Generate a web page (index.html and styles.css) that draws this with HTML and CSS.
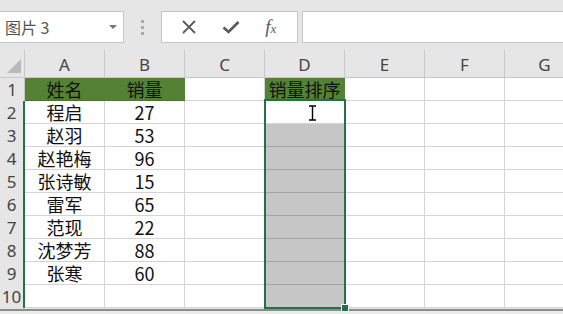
FILE: index.html
```html
<!DOCTYPE html>
<html lang="zh-CN">
<head>
    <meta charset="UTF-8">
    <title>销量排序</title>
    <link rel="stylesheet" href="styles.css">
</head>
<body>
    <div class="toolbar">
        <div class="namebox">
            <span class="name">图片 3</span>
            <span class="caret"></span>
        </div>
        <div class="grip"><i></i><i></i><i></i></div>
        <div class="fbuttons">
            <svg class="ico" width="16" height="16" viewBox="0 0 16 16"><path d="M2 2 L14 14 M14 2 L2 14" stroke="#5a5a5a" stroke-width="1.8" fill="none"/></svg>
            <svg class="ico" width="18" height="16" viewBox="0 0 18 16"><path d="M1.5 8.5 L6.5 13 L16.5 3" stroke="#5a5a5a" stroke-width="2.6" fill="none"/></svg>
            <span class="fx">f<small>x</small></span>
        </div>
        <div class="formula"></div>
    </div>

    <div class="sheet">
        <div class="corner"><svg width="16" height="16" viewBox="0 0 16 16"><polygon points="15,1 15,15 1,15" fill="#b9b9b9"/></svg></div>
        <div class="ch">A</div>
        <div class="ch">B</div>
        <div class="ch">C</div>
        <div class="ch">D</div>
        <div class="ch">E</div>
        <div class="ch">F</div>
        <div class="ch">G</div>

        <div class="rh">1</div>
        <div class="c head">姓名</div>
        <div class="c head">销量</div>
        <div class="c"></div>
        <div class="c head">销量排序</div>
        <div class="c"></div><div class="c"></div><div class="c"></div>

        <div class="rh sel">2</div>
        <div class="c">程启</div><div class="c">27</div><div class="c"></div>
        <div class="c"></div><div class="c"></div><div class="c"></div><div class="c"></div>

        <div class="rh sel">3</div>
        <div class="c">赵羽</div><div class="c">53</div><div class="c"></div>
        <div class="c fill"></div><div class="c"></div><div class="c"></div><div class="c"></div>

        <div class="rh sel">4</div>
        <div class="c">赵艳梅</div><div class="c">96</div><div class="c"></div>
        <div class="c fill"></div><div class="c"></div><div class="c"></div><div class="c"></div>

        <div class="rh sel">5</div>
        <div class="c">张诗敏</div><div class="c">15</div><div class="c"></div>
        <div class="c fill"></div><div class="c"></div><div class="c"></div><div class="c"></div>

        <div class="rh sel">6</div>
        <div class="c">雷军</div><div class="c">65</div><div class="c"></div>
        <div class="c fill"></div><div class="c"></div><div class="c"></div><div class="c"></div>

        <div class="rh sel">7</div>
        <div class="c">范现</div><div class="c">22</div><div class="c"></div>
        <div class="c fill"></div><div class="c"></div><div class="c"></div><div class="c"></div>

        <div class="rh sel">8</div>
        <div class="c">沈梦芳</div><div class="c">88</div><div class="c"></div>
        <div class="c fill"></div><div class="c"></div><div class="c"></div><div class="c"></div>

        <div class="rh sel">9</div>
        <div class="c">张寒</div><div class="c">60</div><div class="c"></div>
        <div class="c fill"></div><div class="c"></div><div class="c"></div><div class="c"></div>

        <div class="rh sel">10</div>
        <div class="c"></div><div class="c"></div><div class="c"></div>
        <div class="c fill"></div><div class="c"></div><div class="c"></div><div class="c"></div>

        <div class="selection">
            <svg class="cursor" width="9" height="16" viewBox="0 0 9 16"><path d="M1 1 H8 M4.5 1 V15 M1 15 H8" stroke="#000" stroke-width="1.4" fill="none"/></svg>
            <span class="handle"></span>
        </div>
    </div>
    <div class="footer"></div>
</body>
</html>
```

FILE: styles.css
```css
body {
    margin: 0;
    width: 563px;
    height: 314px;
    overflow: hidden;
    background-color: #e6e6e6;
    font-family: "Noto Sans CJK SC", sans-serif;
}
.toolbar {
    height: 50px;
    display: flex;
    align-items: flex-start;
    padding-top: 11px;
    box-sizing: border-box;
}
.namebox {
    width: 124px;
    height: 32px;
    box-sizing: border-box;
    background: #fff;
    border: 1px solid #c6c6c6;
    border-left: none;
    display: flex;
    align-items: center;
    justify-content: space-between;
    padding: 0 6px 0 5px;
}
.name {
    font-size: 16px;
    color: #555;
}
.caret {
    width: 0;
    height: 0;
    border-left: 4px solid transparent;
    border-right: 4px solid transparent;
    border-top: 4px solid #777;
}
.grip {
    width: 37px;
    display: flex;
    flex-direction: column;
    align-items: center;
    gap: 3px;
    padding-top: 9px;
}
.grip i {
    width: 3px;
    height: 3px;
    background: #a9a9a9;
}
.fbuttons {
    width: 137px;
    height: 32px;
    box-sizing: border-box;
    background: #fff;
    border: 1px solid #c6c6c6;
    display: flex;
    align-items: center;
    justify-content: space-around;
    padding: 0 8px 0 6px;
}
.fx {
    font-family: "Liberation Serif", serif;
    font-style: italic;
    font-size: 19px;
    color: #5a5a5a;
}
.fx small {
    font-size: 13px;
}
.formula {
    flex: 1;
    height: 32px;
    margin-left: 4px;
    box-sizing: border-box;
    background: #fff;
    border: 1px solid #c6c6c6;
    border-right: none;
}
.sheet {
    position: relative;
    display: grid;
    grid-template-columns: 25px repeat(7, 80px);
    grid-template-rows: 28px repeat(10, 23px);
    background: #fff;
}
.corner {
    background: #e6e6e6;
    border-right: 1px solid #c8c8c8;
    border-bottom: 1px solid #c8c8c8;
    display: flex;
    align-items: flex-end;
    justify-content: flex-end;
    padding: 0 2px 3px 0;
}
.ch {
    background: #e6e6e6;
    border-right: 1px solid #c8c8c8;
    border-bottom: 1px solid #c8c8c8;
    display: flex;
    align-items: flex-end;
    justify-content: center;
    padding-bottom: 1px;
    font-family: "Noto Sans", sans-serif;
    font-size: 17px;
    color: #444;
    line-height: 22px;
}
.ch, .c, .rh, .corner {
    box-sizing: border-box;
}
.rh {
    background: #e6e6e6;
    border-right: 1px solid #c8c8c8;
    display: flex;
    align-items: center;
    justify-content: center;
    font-family: "Noto Sans", sans-serif;
    font-size: 17px;
    line-height: 20px;
    color: #444;
}
.rh.sel {
    border-right: 2px solid #217346;
}
.c {
    border-right: 1px solid #d4d4d4;
    border-bottom: 1px solid #d4d4d4;
    display: flex;
    align-items: center;
    justify-content: center;
    font-size: 18px;
    line-height: 20px;
    color: #111;
    white-space: nowrap;
}
.c.head {
    background: #548235;
    border-right-color: #548235;
    border-bottom-color: #4a7530;
}
.c.fill {
    background: #c6c6c6;
    border-bottom-color: #a3a3a3;
}
/* sits over D2:D10, taken out of auto placement */
.selection {
    position: absolute;
    grid-column: 5 / 6;
    grid-row: 3 / 12;
    top: -2px;
    left: -1px;
    right: -1px;
    bottom: -1px;
    border: 2px solid #217346;
}
.cursor {
    position: absolute;
    left: 42px;
    top: 4px;
}
.handle {
    position: absolute;
    right: -5px;
    bottom: -5px;
    width: 6px;
    height: 6px;
    background: #217346;
    border: 1px solid #fff;
}
.footer {
    border-top: 2px solid #8c8c8c;
    margin-top: 1px;
    height: 10px;
    background: #ececec;
}
```
